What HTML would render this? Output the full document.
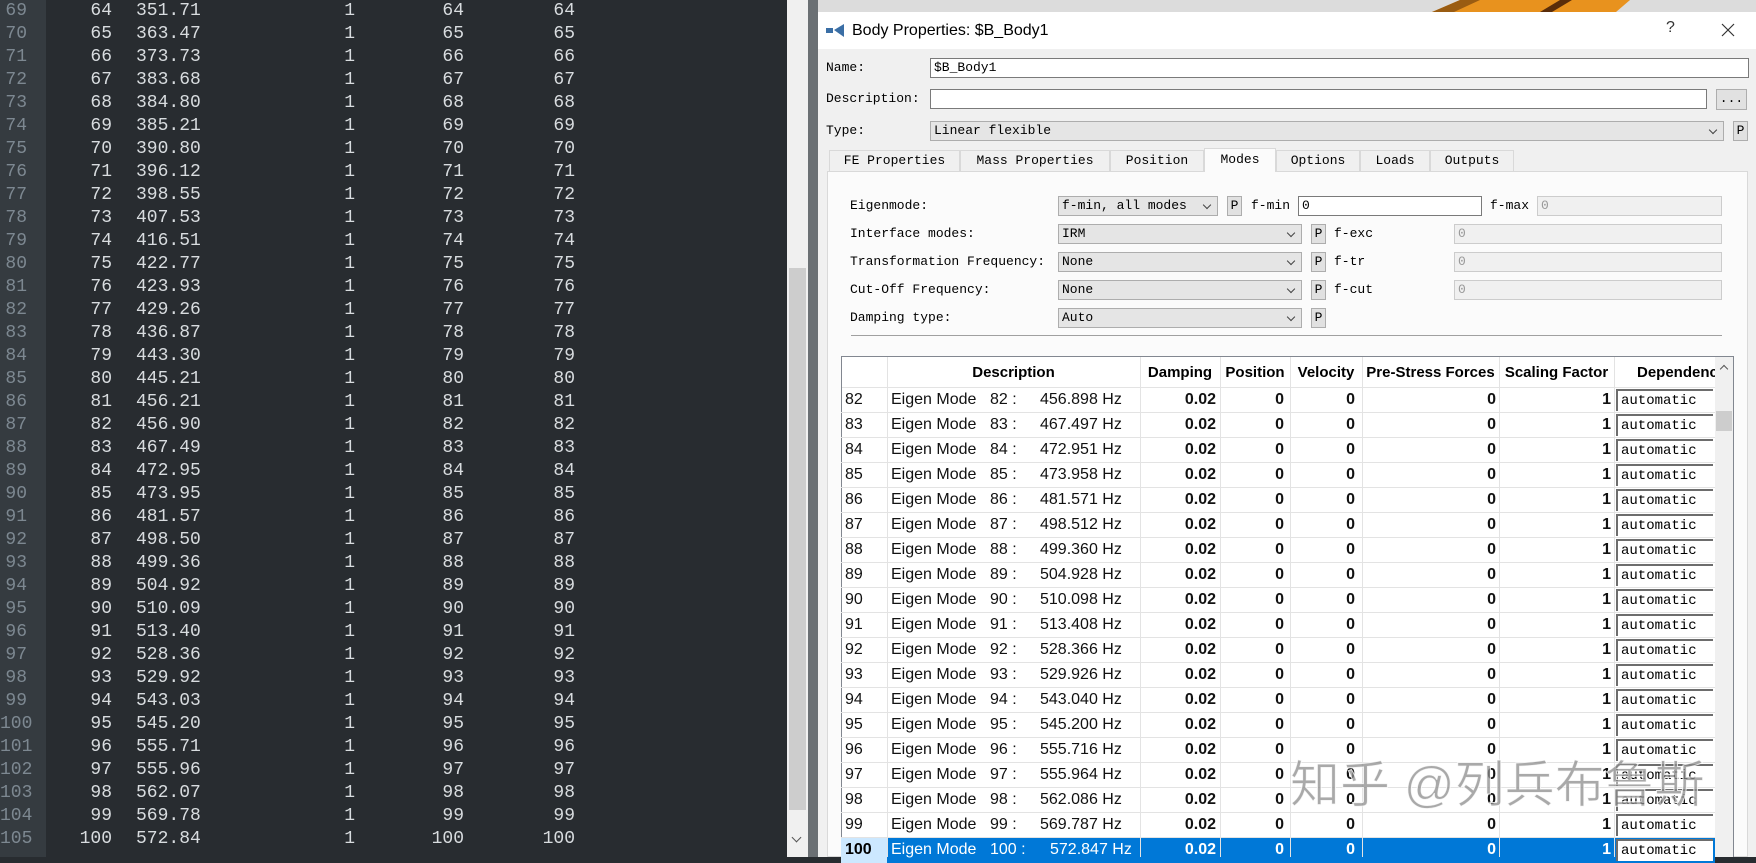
<!DOCTYPE html>
<html><head><meta charset="utf-8">
<style>
*{margin:0;padding:0;box-sizing:border-box}
body{width:1756px;height:857px;overflow:hidden;position:relative;background:#282c30;font-family:"Liberation Sans",sans-serif}
.ab{position:absolute}
#ed{left:0;top:0;width:787px;height:857px;background:#282c30;font-family:"Liberation Mono",monospace;font-size:18px;color:#d8dcdf}
#gut{left:0;top:0;width:46px;height:857px;background:#353b40}
.r{position:absolute;left:0;height:23px;line-height:23px;width:787px}
.r span{position:absolute;white-space:pre}
.r .a{left:0;width:27px;text-align:right;color:#7d8891}
.r .b{left:60px;width:52px;text-align:right}
.r .c{left:136px}
.r .d{left:300px;width:55px;text-align:right}
.r .e{left:400px;width:64px;text-align:right}
.r .f{left:510px;width:65px;text-align:right}
.inp{position:absolute;background:#fff;border:1px solid #7a7a7a;height:20px;font-family:"Liberation Mono",monospace;font-size:13px;line-height:18px;padding-left:3px}
.cmb{position:absolute;background:#e5e5e5;border:1px solid #adadad;height:20px;font-family:"Liberation Mono",monospace;font-size:13px;line-height:18px;padding-left:3px}
.cmb::after{content:"";position:absolute;right:7px;top:5px;width:5px;height:5px;border-right:1px solid #444;border-bottom:1px solid #444;transform:rotate(45deg)}
.dis{position:absolute;background:#f0f0f0;border:1px solid #ccc;height:20px;font-family:"Liberation Mono",monospace;font-size:13px;line-height:18px;padding-left:3px;color:#999}
.pb{position:absolute;background:#e1e1e1;border:1px solid #adadad;width:15px;height:20px;font-family:"Liberation Mono",monospace;font-size:13px;line-height:18px;text-align:center}
.lbl{position:absolute;font-family:"Liberation Mono",monospace;font-size:13px;line-height:20px}
.tab{position:absolute;top:150px;height:21px;border:1px solid #d9d9d9;border-bottom:none;background:#f0f0f0;font-family:"Liberation Mono",monospace;font-size:13px;line-height:20px;text-align:center}
.tr{position:absolute;left:841px;width:874px;height:25px;border-bottom:1px solid #e3e3e3;font-size:16px;line-height:24px;color:#111}
.tr span{position:absolute;white-space:pre}
.n{left:4px}.d1{left:50px}.d2{left:149px}.d3{left:199px}
.dm{left:299px;width:76px;text-align:right;font-weight:bold}
.p1{left:379px;width:64px;text-align:right;font-weight:bold}
.p2{left:449px;width:65px;text-align:right;font-weight:bold}
.p3{left:521px;width:134px;text-align:right;font-weight:bold}
.p4{left:658px;width:112px;text-align:right;font-weight:bold}
.au{left:775px;top:1px;width:97px;height:22px;background:#fff;border-top:2px solid #6d6d6d;border-left:2px solid #6d6d6d;font-family:"Liberation Mono",monospace;font-size:14px;line-height:20px;padding-left:3px;color:#000}
.vl{position:absolute;top:357px;height:500px;width:1px;background:#e3e3e3}
.th{position:absolute;top:357px;height:31px;line-height:31px;font-weight:bold;font-size:15px;text-align:center;white-space:nowrap;overflow:hidden}
</style></head><body>
<div id="ed" class="ab">
<div id="gut" class="ab"></div>
<div class="r" style="top:0"><span class="a">69</span><span class="b">64</span><span class="c">351.71</span><span class="d">1</span><span class="e">64</span><span class="f">64</span></div>
<div class="r" style="top:23px"><span class="a">70</span><span class="b">65</span><span class="c">363.47</span><span class="d">1</span><span class="e">65</span><span class="f">65</span></div>
<div class="r" style="top:46px"><span class="a">71</span><span class="b">66</span><span class="c">373.73</span><span class="d">1</span><span class="e">66</span><span class="f">66</span></div>
<div class="r" style="top:69px"><span class="a">72</span><span class="b">67</span><span class="c">383.68</span><span class="d">1</span><span class="e">67</span><span class="f">67</span></div>
<div class="r" style="top:92px"><span class="a">73</span><span class="b">68</span><span class="c">384.80</span><span class="d">1</span><span class="e">68</span><span class="f">68</span></div>
<div class="r" style="top:115px"><span class="a">74</span><span class="b">69</span><span class="c">385.21</span><span class="d">1</span><span class="e">69</span><span class="f">69</span></div>
<div class="r" style="top:138px"><span class="a">75</span><span class="b">70</span><span class="c">390.80</span><span class="d">1</span><span class="e">70</span><span class="f">70</span></div>
<div class="r" style="top:161px"><span class="a">76</span><span class="b">71</span><span class="c">396.12</span><span class="d">1</span><span class="e">71</span><span class="f">71</span></div>
<div class="r" style="top:184px"><span class="a">77</span><span class="b">72</span><span class="c">398.55</span><span class="d">1</span><span class="e">72</span><span class="f">72</span></div>
<div class="r" style="top:207px"><span class="a">78</span><span class="b">73</span><span class="c">407.53</span><span class="d">1</span><span class="e">73</span><span class="f">73</span></div>
<div class="r" style="top:230px"><span class="a">79</span><span class="b">74</span><span class="c">416.51</span><span class="d">1</span><span class="e">74</span><span class="f">74</span></div>
<div class="r" style="top:253px"><span class="a">80</span><span class="b">75</span><span class="c">422.77</span><span class="d">1</span><span class="e">75</span><span class="f">75</span></div>
<div class="r" style="top:276px"><span class="a">81</span><span class="b">76</span><span class="c">423.93</span><span class="d">1</span><span class="e">76</span><span class="f">76</span></div>
<div class="r" style="top:299px"><span class="a">82</span><span class="b">77</span><span class="c">429.26</span><span class="d">1</span><span class="e">77</span><span class="f">77</span></div>
<div class="r" style="top:322px"><span class="a">83</span><span class="b">78</span><span class="c">436.87</span><span class="d">1</span><span class="e">78</span><span class="f">78</span></div>
<div class="r" style="top:345px"><span class="a">84</span><span class="b">79</span><span class="c">443.30</span><span class="d">1</span><span class="e">79</span><span class="f">79</span></div>
<div class="r" style="top:368px"><span class="a">85</span><span class="b">80</span><span class="c">445.21</span><span class="d">1</span><span class="e">80</span><span class="f">80</span></div>
<div class="r" style="top:391px"><span class="a">86</span><span class="b">81</span><span class="c">456.21</span><span class="d">1</span><span class="e">81</span><span class="f">81</span></div>
<div class="r" style="top:414px"><span class="a">87</span><span class="b">82</span><span class="c">456.90</span><span class="d">1</span><span class="e">82</span><span class="f">82</span></div>
<div class="r" style="top:437px"><span class="a">88</span><span class="b">83</span><span class="c">467.49</span><span class="d">1</span><span class="e">83</span><span class="f">83</span></div>
<div class="r" style="top:460px"><span class="a">89</span><span class="b">84</span><span class="c">472.95</span><span class="d">1</span><span class="e">84</span><span class="f">84</span></div>
<div class="r" style="top:483px"><span class="a">90</span><span class="b">85</span><span class="c">473.95</span><span class="d">1</span><span class="e">85</span><span class="f">85</span></div>
<div class="r" style="top:506px"><span class="a">91</span><span class="b">86</span><span class="c">481.57</span><span class="d">1</span><span class="e">86</span><span class="f">86</span></div>
<div class="r" style="top:529px"><span class="a">92</span><span class="b">87</span><span class="c">498.50</span><span class="d">1</span><span class="e">87</span><span class="f">87</span></div>
<div class="r" style="top:552px"><span class="a">93</span><span class="b">88</span><span class="c">499.36</span><span class="d">1</span><span class="e">88</span><span class="f">88</span></div>
<div class="r" style="top:575px"><span class="a">94</span><span class="b">89</span><span class="c">504.92</span><span class="d">1</span><span class="e">89</span><span class="f">89</span></div>
<div class="r" style="top:598px"><span class="a">95</span><span class="b">90</span><span class="c">510.09</span><span class="d">1</span><span class="e">90</span><span class="f">90</span></div>
<div class="r" style="top:621px"><span class="a">96</span><span class="b">91</span><span class="c">513.40</span><span class="d">1</span><span class="e">91</span><span class="f">91</span></div>
<div class="r" style="top:644px"><span class="a">97</span><span class="b">92</span><span class="c">528.36</span><span class="d">1</span><span class="e">92</span><span class="f">92</span></div>
<div class="r" style="top:667px"><span class="a">98</span><span class="b">93</span><span class="c">529.92</span><span class="d">1</span><span class="e">93</span><span class="f">93</span></div>
<div class="r" style="top:690px"><span class="a">99</span><span class="b">94</span><span class="c">543.03</span><span class="d">1</span><span class="e">94</span><span class="f">94</span></div>
<div class="r" style="top:713px"><span class="a">100</span><span class="b">95</span><span class="c">545.20</span><span class="d">1</span><span class="e">95</span><span class="f">95</span></div>
<div class="r" style="top:736px"><span class="a">101</span><span class="b">96</span><span class="c">555.71</span><span class="d">1</span><span class="e">96</span><span class="f">96</span></div>
<div class="r" style="top:759px"><span class="a">102</span><span class="b">97</span><span class="c">555.96</span><span class="d">1</span><span class="e">97</span><span class="f">97</span></div>
<div class="r" style="top:782px"><span class="a">103</span><span class="b">98</span><span class="c">562.07</span><span class="d">1</span><span class="e">98</span><span class="f">98</span></div>
<div class="r" style="top:805px"><span class="a">104</span><span class="b">99</span><span class="c">569.78</span><span class="d">1</span><span class="e">99</span><span class="f">99</span></div>
<div class="r" style="top:828px"><span class="a">105</span><span class="b">100</span><span class="c">572.84</span><span class="d">1</span><span class="e">100</span><span class="f">100</span></div>
</div>
<div class="ab" style="left:787px;top:0;width:21px;height:857px;background:#f0f0f0"></div>
<div class="ab" style="left:789px;top:268px;width:17px;height:542px;background:#cdcdcd"></div>
<div class="ab" style="left:793px;top:834px;width:7px;height:7px;border-right:1.5px solid #555;border-bottom:1.5px solid #555;transform:rotate(45deg)"></div>
<div class="ab" style="left:808px;top:0;width:10px;height:857px;background:#6b7074"></div>
<div class="ab" style="left:818px;top:0;width:938px;height:12px;background:#dcdcdc"></div>
<svg class="ab" style="left:1420px;top:0" width="220" height="12"><polygon points="12,12 40,0 210,0 196,12" fill="#e8921e"/><polygon points="12,12 40,0 60,0 34,12" fill="#9a5c12"/><polygon points="120,12 140,0 152,0 132,12" fill="#5a2d0a"/></svg>
<div class="ab" style="left:818px;top:12px;width:938px;height:845px;background:#f0f0f0;border-top:1px solid #999"></div>
<div class="ab" style="left:818px;top:12px;width:938px;height:37px;background:#fff"></div>
<svg class="ab" style="left:826px;top:24px" width="20" height="14"><rect x="0" y="4" width="7" height="5" fill="#3a6ea5"/><polygon points="8,6 18,0 18,13" fill="#3a6ea5"/></svg>
<div class="ab" style="left:852px;top:20px;font-size:16px;line-height:22px">Body Properties: $B_Body1</div>
<div class="ab" style="left:1666px;top:19px;font-size:16px;color:#333">?</div>
<svg class="ab" style="left:1721px;top:23px" width="14" height="14"><path d="M1 1L13 13M13 1L1 13" stroke="#333" stroke-width="1.2"/></svg>
<div class="lbl" style="left:826px;top:58px">Name:</div>
<div class="inp" style="left:930px;top:58px;width:819px">$B_Body1</div>
<div class="lbl" style="left:826px;top:89px">Description:</div>
<div class="inp" style="left:930px;top:89px;width:777px"></div>
<div class="pb" style="left:1716px;top:89px;width:31px;height:21px">...</div>
<div class="lbl" style="left:826px;top:121px">Type:</div>
<div class="cmb" style="left:930px;top:121px;width:794px">Linear flexible</div>
<div class="pb" style="left:1733px;top:121px">P</div>
<div class="ab" style="left:827px;top:171px;width:921px;height:686px;background:#fbfbfb;border:1px solid #d9d9d9"></div>
<div class="tab" style="left:829px;width:131px">FE Properties</div>
<div class="tab" style="left:960px;width:150px">Mass Properties</div>
<div class="tab" style="left:1110px;width:94px">Position</div>
<div class="tab" style="left:1204px;width:72px;top:148px;height:24px;background:#fbfbfb;line-height:22px">Modes</div>
<div class="tab" style="left:1276px;width:84px">Options</div>
<div class="tab" style="left:1360px;width:70px">Loads</div>
<div class="tab" style="left:1430px;width:84px">Outputs</div>
<div class="lbl" style="left:850px;top:196px">Eigenmode:</div>
<div class="cmb" style="left:1058px;top:196px;width:160px">f-min, all modes</div>
<div class="pb" style="left:1227px;top:196px">P</div>
<div class="lbl" style="left:1251px;top:196px">f-min</div>
<div class="inp" style="left:1298px;top:196px;width:184px">0</div>
<div class="lbl" style="left:1490px;top:196px">f-max</div>
<div class="dis" style="left:1537px;top:196px;width:185px">0</div>
<div class="lbl" style="left:850px;top:224px">Interface modes:</div>
<div class="cmb" style="left:1058px;top:224px;width:244px">IRM</div>
<div class="pb" style="left:1311px;top:224px">P</div>
<div class="lbl" style="left:1334px;top:224px">f-exc</div>
<div class="dis" style="left:1454px;top:224px;width:268px">0</div>
<div class="lbl" style="left:850px;top:252px">Transformation Frequency:</div>
<div class="cmb" style="left:1058px;top:252px;width:244px">None</div>
<div class="pb" style="left:1311px;top:252px">P</div>
<div class="lbl" style="left:1334px;top:252px">f-tr</div>
<div class="dis" style="left:1454px;top:252px;width:268px">0</div>
<div class="lbl" style="left:850px;top:280px">Cut-Off Frequency:</div>
<div class="cmb" style="left:1058px;top:280px;width:244px">None</div>
<div class="pb" style="left:1311px;top:280px">P</div>
<div class="lbl" style="left:1334px;top:280px">f-cut</div>
<div class="dis" style="left:1454px;top:280px;width:268px">0</div>
<div class="lbl" style="left:850px;top:308px">Damping type:</div>
<div class="cmb" style="left:1058px;top:308px;width:244px">Auto</div>
<div class="pb" style="left:1311px;top:308px">P</div>
<div class="ab" style="left:851px;top:335px;width:871px;height:1px;background:#a0a0a0"></div>
<div class="ab" style="left:841px;top:356px;width:893px;height:501px;background:#fff;border:1px solid #828790"></div>
<div class="ab" style="left:842px;top:387px;width:873px;height:1px;background:#e3e3e3"></div>
<div class="th" style="left:887px;width:253px">Description</div>
<div class="th" style="left:1140px;width:80px">Damping</div>
<div class="th" style="left:1220px;width:70px">Position</div>
<div class="th" style="left:1290px;width:72px">Velocity</div>
<div class="th" style="left:1362px;width:137px">Pre-Stress Forces</div>
<div class="th" style="left:1499px;width:115px">Scaling Factor</div>
<div class="th" style="left:1614px;width:101px;text-align:left;padding-left:23px">Dependency</div>
<div class="ab" style="left:1715px;top:357px;width:18px;height:500px;background:#f0f0f0"></div>
<div class="ab" style="left:1721px;top:366px;width:6px;height:6px;border-left:1.5px solid #555;border-top:1.5px solid #555;transform:rotate(45deg)"></div>
<div class="ab" style="left:1716px;top:411px;width:16px;height:20px;background:#cdcdcd"></div>

<div class="tr" style="top:388px"><span class="n">82</span><span class="d1">Eigen Mode</span><span class="d2">82 :</span><span class="d3">456.898 Hz</span><span class="dm">0.02</span><span class="p1">0</span><span class="p2">0</span><span class="p3">0</span><span class="p4">1</span><span class="au">automatic</span></div>
<div class="tr" style="top:413px"><span class="n">83</span><span class="d1">Eigen Mode</span><span class="d2">83 :</span><span class="d3">467.497 Hz</span><span class="dm">0.02</span><span class="p1">0</span><span class="p2">0</span><span class="p3">0</span><span class="p4">1</span><span class="au">automatic</span></div>
<div class="tr" style="top:438px"><span class="n">84</span><span class="d1">Eigen Mode</span><span class="d2">84 :</span><span class="d3">472.951 Hz</span><span class="dm">0.02</span><span class="p1">0</span><span class="p2">0</span><span class="p3">0</span><span class="p4">1</span><span class="au">automatic</span></div>
<div class="tr" style="top:463px"><span class="n">85</span><span class="d1">Eigen Mode</span><span class="d2">85 :</span><span class="d3">473.958 Hz</span><span class="dm">0.02</span><span class="p1">0</span><span class="p2">0</span><span class="p3">0</span><span class="p4">1</span><span class="au">automatic</span></div>
<div class="tr" style="top:488px"><span class="n">86</span><span class="d1">Eigen Mode</span><span class="d2">86 :</span><span class="d3">481.571 Hz</span><span class="dm">0.02</span><span class="p1">0</span><span class="p2">0</span><span class="p3">0</span><span class="p4">1</span><span class="au">automatic</span></div>
<div class="tr" style="top:513px"><span class="n">87</span><span class="d1">Eigen Mode</span><span class="d2">87 :</span><span class="d3">498.512 Hz</span><span class="dm">0.02</span><span class="p1">0</span><span class="p2">0</span><span class="p3">0</span><span class="p4">1</span><span class="au">automatic</span></div>
<div class="tr" style="top:538px"><span class="n">88</span><span class="d1">Eigen Mode</span><span class="d2">88 :</span><span class="d3">499.360 Hz</span><span class="dm">0.02</span><span class="p1">0</span><span class="p2">0</span><span class="p3">0</span><span class="p4">1</span><span class="au">automatic</span></div>
<div class="tr" style="top:563px"><span class="n">89</span><span class="d1">Eigen Mode</span><span class="d2">89 :</span><span class="d3">504.928 Hz</span><span class="dm">0.02</span><span class="p1">0</span><span class="p2">0</span><span class="p3">0</span><span class="p4">1</span><span class="au">automatic</span></div>
<div class="tr" style="top:588px"><span class="n">90</span><span class="d1">Eigen Mode</span><span class="d2">90 :</span><span class="d3">510.098 Hz</span><span class="dm">0.02</span><span class="p1">0</span><span class="p2">0</span><span class="p3">0</span><span class="p4">1</span><span class="au">automatic</span></div>
<div class="tr" style="top:613px"><span class="n">91</span><span class="d1">Eigen Mode</span><span class="d2">91 :</span><span class="d3">513.408 Hz</span><span class="dm">0.02</span><span class="p1">0</span><span class="p2">0</span><span class="p3">0</span><span class="p4">1</span><span class="au">automatic</span></div>
<div class="tr" style="top:638px"><span class="n">92</span><span class="d1">Eigen Mode</span><span class="d2">92 :</span><span class="d3">528.366 Hz</span><span class="dm">0.02</span><span class="p1">0</span><span class="p2">0</span><span class="p3">0</span><span class="p4">1</span><span class="au">automatic</span></div>
<div class="tr" style="top:663px"><span class="n">93</span><span class="d1">Eigen Mode</span><span class="d2">93 :</span><span class="d3">529.926 Hz</span><span class="dm">0.02</span><span class="p1">0</span><span class="p2">0</span><span class="p3">0</span><span class="p4">1</span><span class="au">automatic</span></div>
<div class="tr" style="top:688px"><span class="n">94</span><span class="d1">Eigen Mode</span><span class="d2">94 :</span><span class="d3">543.040 Hz</span><span class="dm">0.02</span><span class="p1">0</span><span class="p2">0</span><span class="p3">0</span><span class="p4">1</span><span class="au">automatic</span></div>
<div class="tr" style="top:713px"><span class="n">95</span><span class="d1">Eigen Mode</span><span class="d2">95 :</span><span class="d3">545.200 Hz</span><span class="dm">0.02</span><span class="p1">0</span><span class="p2">0</span><span class="p3">0</span><span class="p4">1</span><span class="au">automatic</span></div>
<div class="tr" style="top:738px"><span class="n">96</span><span class="d1">Eigen Mode</span><span class="d2">96 :</span><span class="d3">555.716 Hz</span><span class="dm">0.02</span><span class="p1">0</span><span class="p2">0</span><span class="p3">0</span><span class="p4">1</span><span class="au">automatic</span></div>
<div class="tr" style="top:763px"><span class="n">97</span><span class="d1">Eigen Mode</span><span class="d2">97 :</span><span class="d3">555.964 Hz</span><span class="dm">0.02</span><span class="p1">0</span><span class="p2">0</span><span class="p3">0</span><span class="p4">1</span><span class="au">automatic</span></div>
<div class="tr" style="top:788px"><span class="n">98</span><span class="d1">Eigen Mode</span><span class="d2">98 :</span><span class="d3">562.086 Hz</span><span class="dm">0.02</span><span class="p1">0</span><span class="p2">0</span><span class="p3">0</span><span class="p4">1</span><span class="au">automatic</span></div>
<div class="tr" style="top:813px"><span class="n">99</span><span class="d1">Eigen Mode</span><span class="d2">99 :</span><span class="d3">569.787 Hz</span><span class="dm">0.02</span><span class="p1">0</span><span class="p2">0</span><span class="p3">0</span><span class="p4">1</span><span class="au">automatic</span></div>
<div class="tr" style="top:838px;color:#fff"><span style="left:0;top:0;width:46px;height:25px;background:#cce8ff"></span><span style="left:46px;top:0;width:828px;height:25px;background:#0078d7"></span><span class="n" style="color:#000;font-weight:bold">100</span><span class="d1">Eigen Mode</span><span class="d2">100 :</span><span class="d3" style="left:209px">572.847 Hz</span><span class="dm">0.02</span><span class="p1">0</span><span class="p2">0</span><span class="p3">0</span><span class="p4">1</span><span class="au">automatic</span></div>

<div class="vl" style="left:887px"></div>
<div class="vl" style="left:1140px"></div>
<div class="vl" style="left:1220px"></div>
<div class="vl" style="left:1290px"></div>
<div class="vl" style="left:1362px"></div>
<div class="vl" style="left:1499px"></div>
<div class="vl" style="left:1614px"></div>

<div class="ab" style="left:1290px;top:752px;font-family:'Liberation Sans','Noto Sans CJK SC',sans-serif;font-size:50px;line-height:66px;color:rgba(140,140,140,0.75);-webkit-text-stroke:1px rgba(255,255,255,0.8);white-space:nowrap">知乎 @列兵布鲁斯</div>
</body></html>
